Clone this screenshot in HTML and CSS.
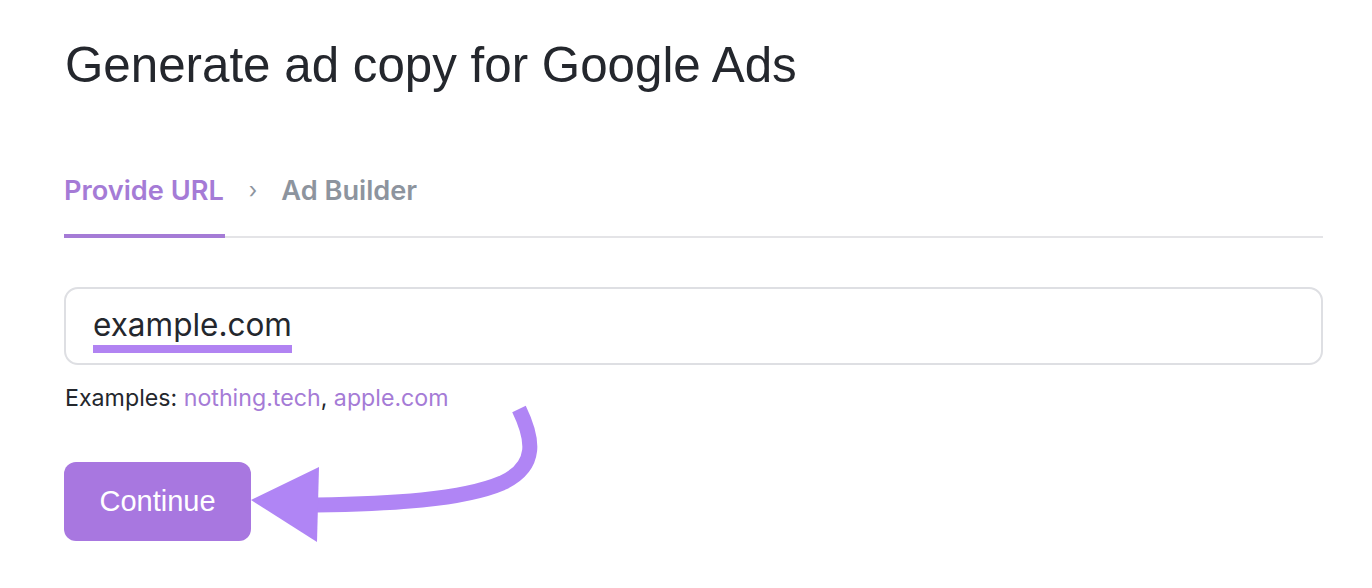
FILE: index.html
```html
<!DOCTYPE html>
<html lang="en">
<head>
<meta charset="utf-8">
<title>Generate ad copy for Google Ads</title>
<link rel="stylesheet" href="styles.css">
</head>
<body>
<main class="page">
  <h1 class="title">Generate ad copy for Google Ads</h1>
  <nav class="tabs">
    <div class="tab tab-active">Provide URL</div>
    <span class="tab-sep">&#8250;</span>
    <div class="tab tab-inactive">Ad Builder</div>
  </nav>
  <div class="field">
    <span class="field-value">example.com</span>
  </div>
  <p class="examples">Examples: <a class="ex-link">nothing.tech</a>, <a class="ex-link">apple.com</a></p>
  <div class="actions">
    <button class="btn">Continue</button>
    <svg class="arrow" width="320" height="160" viewBox="240 400 320 160">
      <path d="M519 409 C533 438 539 466 502 483 C462 500 390 504 316 505" fill="none" stroke="#b085f5" stroke-width="15"/>
      <polygon points="251,500 319,467 317,542" fill="#b085f5"/>
    </svg>
  </div>
</main>
</body>
</html>
```
FILE: styles.css
```css
* { box-sizing: border-box; }
html, body { margin: 0; padding: 0; background: #ffffff; }
body { font-family: "Liberation Sans", Arial, sans-serif; color: #24272d; }
.page {
  width: 1372px;
  height: 588px;
  padding: 0 49px 0 64px;
  display: flex;
  flex-direction: column;
  overflow: hidden;
}
.title {
  margin: 35px 0 0 1px;
  font-size: 49.3px;
  line-height: 60px;
  font-weight: 400;
  color: #24272d;
}
.tabs {
  margin-top: 79px;
  display: flex;
  align-items: flex-start;
  border-bottom: 2px solid #e4e4e7;
  height: 64px;
  font-family: Inter, "Liberation Sans", sans-serif;
  font-size: 27.2px;
  font-weight: 600;
  line-height: 33px;
}
.tab { height: 64px; }
.tab-active {
  color: #a57bd6;
  border-bottom: 4px solid #a57bd6;
  margin-bottom: -2px;
  padding-right: 1px;
}
.tab-sep {
  color: #8d949e;
  font-weight: 400;
  font-size: 22px;
  margin: 0 24px 0 24px;
  line-height: 33px;
}
.tab-inactive { color: #8d949e; }
.field {
  margin-top: 49px;
  height: 78px;
  flex-shrink: 0;
  border: 2px solid #dedfe3;
  border-radius: 14px;
  padding: 0 0 0 27px;
  display: flex;
  align-items: center;
}
.field-value {
  font-family: Inter, "Liberation Sans", sans-serif;
  font-size: 31.5px;
  color: #24272d;
  border-bottom: 8px solid #b183f2;
  line-height: 32px;
  padding-bottom: 4px;
  margin-top: 10px;
}
.examples {
  margin: 19px 0 0 1px;
  font-family: Inter, "Liberation Sans", sans-serif;
  font-size: 23.2px;
  line-height: 28px;
  color: #24272d;
}
.ex-link { color: #a57bd6; text-decoration: none; }
.actions {
  margin-top: 50px;
  position: relative;
  height: 80px;
  flex-shrink: 0;
}
.btn {
  display: block;
  width: 187px;
  height: 79px;
  border: 0;
  border-radius: 12px;
  background: #a877e0;
  color: #ffffff;
  font-family: "Liberation Sans", Arial, sans-serif;
  font-size: 29px;
  padding: 0;
}
.arrow {
  position: absolute;
  left: 176px;
  top: -62px;
}
```
